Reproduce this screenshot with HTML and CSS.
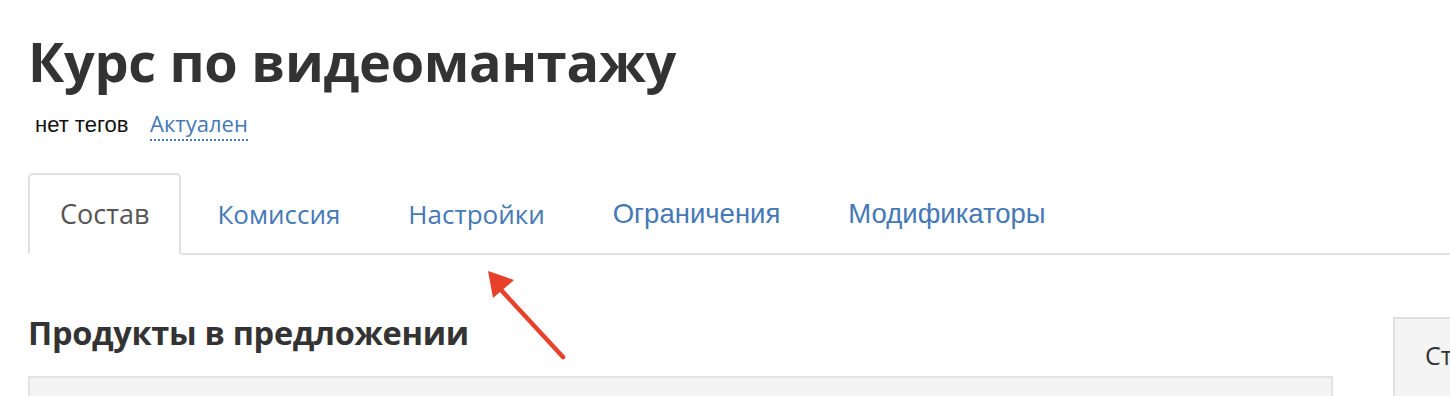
FILE: index.html
```html
<!DOCTYPE html>
<html lang="ru">
<head>
    <meta charset="UTF-8">
    <meta name="viewport" content="width=device-width, initial-scale=1.0">
    <title>Курс по видеомантажу</title>
    <link rel="stylesheet" href="styles.css">
</head>
<body>

    <div class="page">
        <h1 class="offer-title">Курс по видеомантажу</h1>

        <div class="offer-meta">
            <span class="tags">нет тегов</span>
            <a href="#" class="status">Актуален</a>
        </div>

        <ul class="tabs">
            <li class="active"><a href="#">Состав</a></li>
            <li><a href="#">Комиссия</a></li>
            <li><a href="#">Настройки</a></li>
            <li><a href="#" class="alt">Ограничения</a></li>
            <li><a href="#" class="alt">Модификаторы</a></li>
        </ul>

        <div class="content">
            <div class="main-col">
                <h2>Продукты в предложении</h2>
                <div class="products-box"></div>
            </div>
            <aside class="side-col">
                <div class="side-box">Стоимость</div>
            </aside>
        </div>

        <svg class="pointer" width="100" height="100" viewBox="0 0 100 100">
            <line x1="83" y1="92" x2="22" y2="26" stroke="#e8412a" stroke-width="4.5" stroke-linecap="round"/>
            <polygon points="8,6 13,33 34,15" fill="#e8412a"/>
        </svg>
    </div>

</body>
</html>
```

FILE: styles.css
```css
html, body {
    margin: 0;
    padding: 0;
    background: #fff;
    overflow: hidden;
}
body {
    font-family: "Open Sans", Arial, sans-serif;
    color: #333;
}
.page {
    position: relative;
    padding-left: 28px;
    height: 396px;
}
.offer-title {
    margin: 25px 0 0;
    font-size: 54px;
    line-height: 72px;
    font-weight: 700;
    color: #333;
    letter-spacing: -0.3px;
}
.offer-meta {
    margin-top: 13px;
    padding-left: 7px;
    font-size: 22px;
    line-height: 26px;
}
.tags {
    font-family: "Liberation Sans", Arial, sans-serif;
    color: #111;
    margin-right: 16px;
}
.status {
    color: #4579b5;
    text-decoration: none;
    padding-bottom: 1px;
    border-bottom: 2px dotted #4579b5;
}
.tabs {
    list-style: none;
    margin: 35px 0 0;
    padding: 0;
    display: flex;
    border-bottom: 2px solid #e0e0e0;
}
.tabs li {
    margin-bottom: -2px;
    margin-right: 4px;
}
.tabs a {
    display: block;
    padding: 24px 30px;
    font-size: 26px;
    line-height: 30px;
    color: #4579b5;
    text-decoration: none;
    border: 2px solid transparent;
    border-radius: 5px 5px 0 0;
}
.tabs a.alt {
    font-family: "Liberation Sans", Arial, sans-serif;
    font-size: 27.5px;
}
.tabs .active a {
    font-size: 27px;
    color: #555;
    background: #fff;
    border-color: #e0e0e0;
    border-bottom-color: #fff;
}
.content {
    display: flex;
    gap: 60px;
    margin-top: 60px;
}
.main-col {
    flex: 0 0 1305px;
}
.main-col h2 {
    margin: 0 0 25px;
    font-size: 32.5px;
    line-height: 36px;
    font-weight: 700;
    color: #333;
    letter-spacing: -0.3px;
}
.products-box {
    height: 200px;
    background: #f4f4f4;
    border: 2px solid #e2e2e2;
}
.side-col {
    flex: 0 0 320px;
}
.side-box {
    margin-top: 2px;
    height: 200px;
    padding: 21px 30px;
    background: #f4f4f4;
    border: 2px solid #e0e0e0;
    font-size: 25px;
    line-height: 30px;
    color: #333;
    white-space: nowrap;
}
.pointer {
    position: absolute;
    left: 480px;
    top: 240px;
}
```
